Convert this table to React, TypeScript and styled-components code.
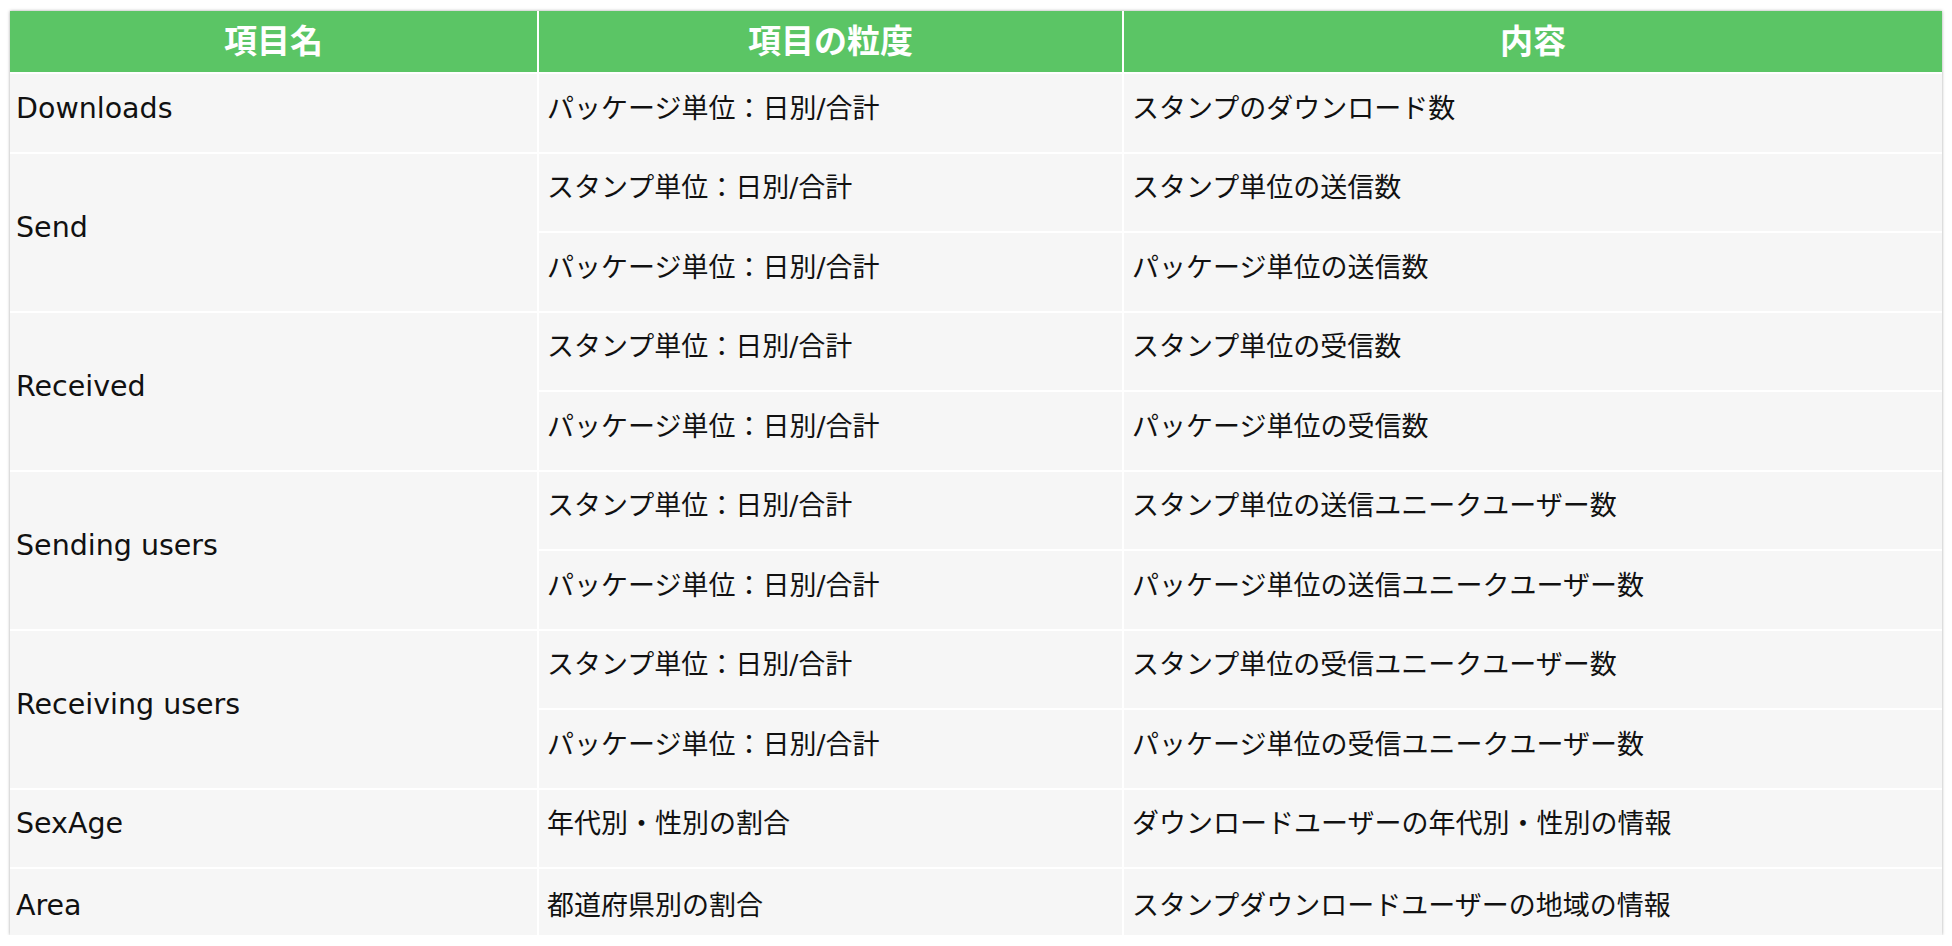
import React from 'react'
import { styled, createGlobalStyle } from 'styled-components'

const GlobalStyle = createGlobalStyle`
html, body {
  margin: 0;
  padding: 0;
  background: #ffffff;
}
body {
  font-family: "DejaVu Sans", "Noto Sans CJK JP", sans-serif;
  color: #111111;
}
`

type Row = {
  name?: string
  span?: number
  unit: string
  content: string
}

const rows: Row[] = [
  { name: 'Downloads', unit: 'パッケージ単位：日別/合計', content: 'スタンプのダウンロード数' },
  { name: 'Send', span: 2, unit: 'スタンプ単位：日別/合計', content: 'スタンプ単位の送信数' },
  { unit: 'パッケージ単位：日別/合計', content: 'パッケージ単位の送信数' },
  { name: 'Received', span: 2, unit: 'スタンプ単位：日別/合計', content: 'スタンプ単位の受信数' },
  { unit: 'パッケージ単位：日別/合計', content: 'パッケージ単位の受信数' },
  { name: 'Sending users', span: 2, unit: 'スタンプ単位：日別/合計', content: 'スタンプ単位の送信ユニークユーザー数' },
  { unit: 'パッケージ単位：日別/合計', content: 'パッケージ単位の送信ユニークユーザー数' },
  { name: 'Receiving users', span: 2, unit: 'スタンプ単位：日別/合計', content: 'スタンプ単位の受信ユニークユーザー数' },
  { unit: 'パッケージ単位：日別/合計', content: 'パッケージ単位の受信ユニークユーザー数' },
  { name: 'SexAge', unit: '年代別・性別の割合', content: 'ダウンロードユーザーの年代別・性別の情報' },
  { name: 'Area', unit: '都道府県別の割合', content: 'スタンプダウンロードユーザーの地域の情報' },
]

const App = () => {
  return (
    <>
      <GlobalStyle />
      <Page>
        <Table>
          <colgroup>
            <col style={{ width: 529 }} />
            <col style={{ width: 585 }} />
            <col />
          </colgroup>
          <thead>
            <tr>
              <Head>項目名</Head>
              <Head>項目の粒度</Head>
              <Head $last>内容</Head>
            </tr>
          </thead>
          <tbody>
            {rows.map((r, i) => {
              const last = i === rows.length - 1
              return (
                <BodyRow key={i} $last={last}>
                  {r.name && (
                    <NameCell rowSpan={r.span || 1} $last={last}>
                      {r.name}
                    </NameCell>
                  )}
                  <Cell $last={last}>{r.unit}</Cell>
                  <Cell $last={last} $end>
                    {r.content}
                  </Cell>
                </BodyRow>
              )
            })}
          </tbody>
        </Table>
      </Page>
    </>
  )
}

export default App

const Page = styled.div`
  padding: 11px 10px 0 10px;
`
const Table = styled.table`
  width: 1932px;
  table-layout: fixed;
  border-collapse: separate;
  border-spacing: 0;
  background: #f6f6f6;
  box-shadow: 0 0 3px rgba(0, 0, 0, 0.35);
`
const Head = styled.th<{ $last?: boolean }>`
  box-sizing: border-box;
  height: 63px;
  padding: 0 0 6px 0;
  background: #5bc565;
  color: #ffffff;
  font-family: "Noto Sans CJK JP", sans-serif;
  font-size: 33px;
  font-weight: 700;
  text-align: center;
  vertical-align: middle;
  border-bottom: 2px solid #ffffff;
  border-right: ${(p) => (p.$last ? 'none' : '2px solid #ffffff')};
`
const BodyRow = styled.tr<{ $last?: boolean }>`
  height: ${(p) => (p.$last ? '66px' : '79.5px')};
`
const Cell = styled.td<{ $last?: boolean; $end?: boolean }>`
  box-sizing: border-box;
  padding: ${(p) => (p.$last ? '8px 6px 0 8px' : '0 6px 9px 8px')};
  font-size: 27px;
  line-height: 1.3;
  white-space: nowrap;
  vertical-align: middle;
  text-align: left;
  border-bottom: ${(p) => (p.$last ? 'none' : '2px solid #ffffff')};
  border-right: ${(p) => (p.$end ? 'none' : '2px solid #ffffff')};
`
const NameCell = styled(Cell)`
  padding-left: 6px;
  font-size: 28.5px;
`
